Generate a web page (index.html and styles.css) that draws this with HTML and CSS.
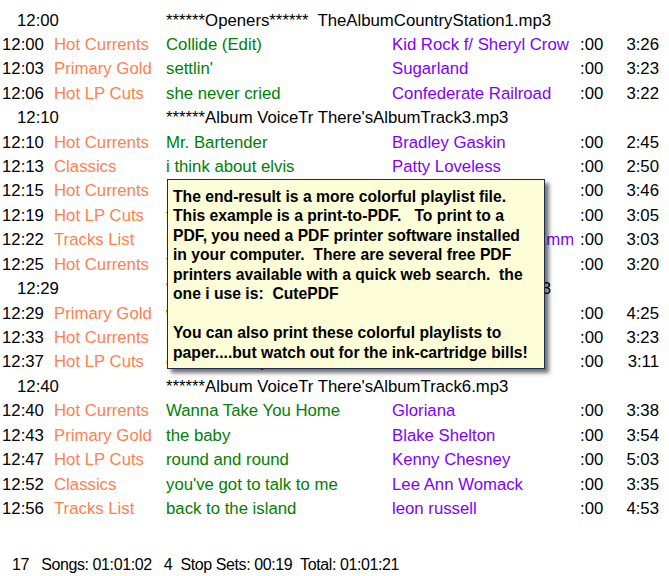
FILE: index.html
```html
<!DOCTYPE html>
<html>
<head>
<meta charset="utf-8">
<link rel="stylesheet" href="styles.css">
</head>
<body>
<div class="page">
  <div class="list">
    <div class="row head"><span class="htime">12:00</span><span class="htext">******Openers******  TheAlbumCountryStation1.mp3</span></div>
    <div class="row"><span class="time">12:00</span><span class="cat">Hot Currents</span><span class="title">Collide (Edit)</span><span class="artist"><span class="clip">Kid Rock f/ Sheryl Crow</span></span><span class="intro">:00</span><span class="dur">3:26</span></div>
    <div class="row"><span class="time">12:03</span><span class="cat">Primary Gold</span><span class="title">settlin'</span><span class="artist"><span class="clip">Sugarland</span></span><span class="intro">:00</span><span class="dur">3:23</span></div>
    <div class="row"><span class="time">12:06</span><span class="cat">Hot LP Cuts</span><span class="title">she never cried</span><span class="artist"><span class="clip">Confederate Railroad</span></span><span class="intro">:00</span><span class="dur">3:22</span></div>
    <div class="row head"><span class="htime">12:10</span><span class="htext">******Album VoiceTr There'sAlbumTrack3.mp3</span></div>
    <div class="row"><span class="time">12:10</span><span class="cat">Hot Currents</span><span class="title">Mr. Bartender</span><span class="artist"><span class="clip">Bradley Gaskin</span></span><span class="intro">:00</span><span class="dur">2:45</span></div>
    <div class="row"><span class="time">12:13</span><span class="cat">Classics</span><span class="title">i think about elvis</span><span class="artist"><span class="clip">Patty Loveless</span></span><span class="intro">:00</span><span class="dur">2:50</span></div>
    <div class="row"><span class="time">12:15</span><span class="cat">Hot Currents</span><span class="title">Somewhere In My Car</span><span class="artist"><span class="clip">Keith Urban</span></span><span class="intro">:00</span><span class="dur">3:46</span></div>
    <div class="row"><span class="time">12:19</span><span class="cat">Hot LP Cuts</span><span class="title">the shape i'm in</span><span class="artist"><span class="clip">Joe Nichols</span></span><span class="intro">:00</span><span class="dur">3:05</span></div>
    <div class="row"><span class="time">12:22</span><span class="cat">Tracks List</span><span class="title">love and happiness</span><span class="artist"><span class="clip">Vince Gill &amp; Patti f/ Emmylou Harris</span></span><span class="intro">:00</span><span class="dur">3:03</span></div>
    <div class="row"><span class="time">12:25</span><span class="cat">Hot Currents</span><span class="title">Tomorrow</span><span class="artist"><span class="clip">Chris Young</span></span><span class="intro">:00</span><span class="dur">3:20</span></div>
    <div class="row head"><span class="htime">12:29</span><span class="htext">******Openers******  TheAlbumCountryStation2.mp3</span></div>
    <div class="row"><span class="time">12:29</span><span class="cat">Primary Gold</span><span class="title">where the green grass grows</span><span class="artist"><span class="clip">Tim McGraw</span></span><span class="intro">:00</span><span class="dur">4:25</span></div>
    <div class="row"><span class="time">12:33</span><span class="cat">Hot Currents</span><span class="title">Honey Bee</span><span class="artist"><span class="clip">Blake Shelton</span></span><span class="intro">:00</span><span class="dur">3:23</span></div>
    <div class="row"><span class="time">12:37</span><span class="cat">Hot LP Cuts</span><span class="title">one more day</span><span class="artist"><span class="clip">Diamond Rio</span></span><span class="intro">:00</span><span class="dur">3:11</span></div>
    <div class="row head"><span class="htime">12:40</span><span class="htext">******Album VoiceTr There'sAlbumTrack6.mp3</span></div>
    <div class="row"><span class="time">12:40</span><span class="cat">Hot Currents</span><span class="title">Wanna Take You Home</span><span class="artist"><span class="clip">Gloriana</span></span><span class="intro">:00</span><span class="dur">3:38</span></div>
    <div class="row"><span class="time">12:43</span><span class="cat">Primary Gold</span><span class="title">the baby</span><span class="artist"><span class="clip">Blake Shelton</span></span><span class="intro">:00</span><span class="dur">3:54</span></div>
    <div class="row"><span class="time">12:47</span><span class="cat">Hot LP Cuts</span><span class="title">round and round</span><span class="artist"><span class="clip">Kenny Chesney</span></span><span class="intro">:00</span><span class="dur">5:03</span></div>
    <div class="row"><span class="time">12:52</span><span class="cat">Classics</span><span class="title">you've got to talk to me</span><span class="artist"><span class="clip">Lee Ann Womack</span></span><span class="intro">:00</span><span class="dur">3:35</span></div>
    <div class="row"><span class="time">12:56</span><span class="cat">Tracks List</span><span class="title">back to the island</span><span class="artist"><span class="clip">leon russell</span></span><span class="intro">:00</span><span class="dur">4:53</span></div>
  </div>
  <div class="footer">17   Songs: 01:01:02   4  Stop Sets: 00:19  Total: 01:01:21</div>

  <div class="tooltip">The end-result is a more colorful playlist file.
This example is a print-to-PDF.   To print to a
PDF, you need a PDF printer software installed
in your computer.  There are several free PDF
printers available with a quick web search.  the
one i use is:  CutePDF

You can also print these colorful playlists to
paper....but watch out for the ink-cartridge bills!</div>
</div>
</body>
</html>
```

FILE: styles.css
```css
html, body {
  margin: 0;
  padding: 0;
  background: #ffffff;
}

body {
  font-family: "Liberation Sans", Arial, sans-serif;
  font-size: 16.75px;
  color: #000;
}

.page {
  position: relative;
  width: 669px;
  height: 576px;
  overflow: hidden;
}

.list {
  padding: 8.5px 0 0 2px;
}

.row {
  display: grid;
  grid-template-columns: 52px 112px 226px 188px 46px 33px;
  height: 24.43px;
  line-height: 24.43px;
  white-space: nowrap;
}

.row > span {
  overflow: hidden;
}

.head .htime {
  grid-column: 1 / 3;
  padding-left: 15px;
}

.head .htext {
  grid-column: 3 / -1;
  white-space: pre;
  overflow: visible;
}

.cat {
  color: #ff7f50;
}

.title {
  color: #008000;
}

.artist {
  color: #8000ff;
}

.artist .clip {
  display: block;
  width: 181px;
  overflow: hidden;
}

.dur {
  text-align: right;
}

.footer {
  margin-top: 31.5px;
  padding-left: 12px;
  white-space: pre;
  line-height: 24px;
  font-size: 16px;
  letter-spacing: -0.4px;
}

.tooltip {
  position: absolute;
  left: 167px;
  top: 179px;
  width: 371px;
  height: 178px;
  padding: 6.5px 0 3.5px 5px;
  background: #fdfdd8;
  border: 1px solid #1c2b4f;
  box-shadow: 4px 4px 4px rgba(0, 0, 0, 0.55);
  font-weight: bold;
  font-size: 15.7px;
  line-height: 19.5px;
  white-space: pre;
  color: #000;
}
```
